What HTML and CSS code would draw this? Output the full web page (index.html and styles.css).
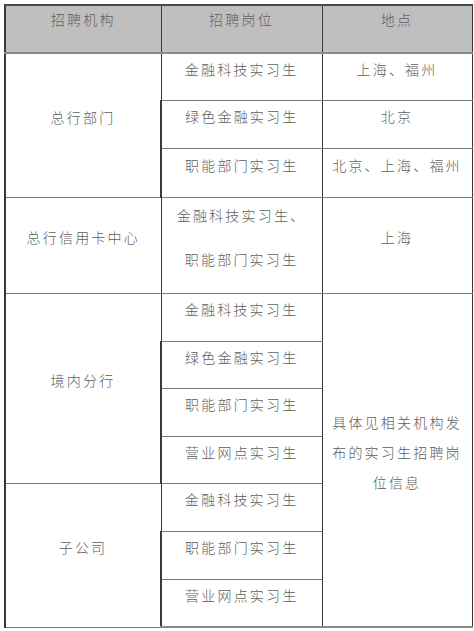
FILE: index.html
```html
<!DOCTYPE html>
<html lang="zh-CN">
<head>
<meta charset="utf-8">
<title>招聘岗位</title>
<link rel="stylesheet" href="styles.css">
</head>
<body>
<table class="jobs">
  <colgroup>
    <col class="c1"><col class="c2"><col class="c3">
  </colgroup>
  <thead>
    <tr class="h48"><th>招聘机构</th><th>招聘岗位</th><th>地点</th></tr>
  </thead>
  <tbody>
    <tr class="h47"><td rowspan="3">总行部门</td><td>金融科技实习生</td><td>上海、福州</td></tr>
    <tr class="h48"><td>绿色金融实习生</td><td>北京</td></tr>
    <tr class="h49"><td>职能部门实习生</td><td>北京、上海、福州</td></tr>
    <tr class="h48"><td rowspan="2">总行信用卡中心</td><td rowspan="2"><div class="p">金融科技实习生、</div><div class="p gap">职能部门实习生</div></td><td rowspan="2">上海</td></tr>
    <tr class="h48"></tr>
    <tr class="h48"><td rowspan="4">境内分行</td><td>金融科技实习生</td><td rowspan="7" class="multi">具体见相关机构发布的实习生招聘岗位信息</td></tr>
    <tr class="h47"><td>绿色金融实习生</td></tr>
    <tr class="h48"><td>职能部门实习生</td></tr>
    <tr class="h47"><td>营业网点实习生</td></tr>
    <tr class="h48"><td rowspan="3">子公司</td><td>金融科技实习生</td></tr>
    <tr class="h48"><td>职能部门实习生</td></tr>
    <tr class="h48"><td>营业网点实习生</td></tr>
  </tbody>
</table>
</body>
</html>
```
FILE: styles.css
```css
html, body {
  margin: 0;
  padding: 0;
  background: #ffffff;
}
body {
  padding: 4px 0 0 4px;
}
.jobs {
  border-collapse: collapse;
  table-layout: fixed;
  width: 467px;
  font-family: "Noto Sans CJK SC", "Noto Sans", sans-serif;
  font-weight: 300;
  font-size: 14px;
  color: #5e5e5e;
  letter-spacing: 2.2px;
}
.c1 { width: 156px; }
.c2 { width: 161px; }
.c3 { width: 150px; }
.jobs th, .jobs td {
  padding: 0 4px 16px;
  line-height: 20px;
  text-align: center;
  vertical-align: middle;
  font-weight: 300;
  border-left: 1px solid #3a3a3a;
  border-right: 1px solid #3a3a3a;
  border-top: 1px solid #7a7a7a;
  border-bottom: 1px solid #7a7a7a;
}
.jobs th {
  background: #bfbfbf;
  padding-bottom: 20px;
  border-top: 2px solid #4a4a4a;
  border-bottom: 2px solid #8a8a8a;
}
.jobs th:first-child, .jobs td:first-child {
  border-left: 2px solid #3a3a3a;
}
.jobs tbody tr:last-child td,
.jobs td.multi {
  border-bottom: 2px solid #8a8a8a;
}
.h47 { height: 47px; }
.h48 { height: 48px; }
.h49 { height: 49px; }
.p.gap { margin-top: 24px; }
.multi {
  line-height: 30px !important;
  padding: 0 6px 16px !important;
}
```
